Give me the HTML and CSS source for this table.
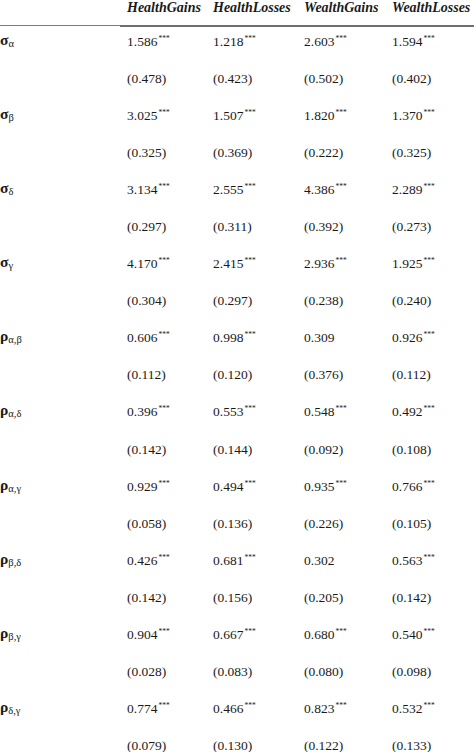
FILE: index.html
```html
<!DOCTYPE html>
<html>
<head>
<meta charset="utf-8">
<link rel="stylesheet" href="styles.css">
</head>
<body>
<div class="table">
  <div class="head">
    <div class="cell"></div>
    <div class="cell hd">HealthGains</div>
    <div class="cell hd">HealthLosses</div>
    <div class="cell hd">WealthGains</div>
    <div class="cell hd">WealthLosses</div>
  </div>
  <div class="rule"></div>
  <div class="body">
    <div class="cell lab"><b>σ</b><sub>α</sub></div>
    <div class="cell">1.586<sup>***</sup></div><div class="cell">1.218<sup>***</sup></div><div class="cell">2.603<sup>***</sup></div><div class="cell">1.594<sup>***</sup></div>
    <div class="cell"></div><div class="cell">(0.478)</div><div class="cell">(0.423)</div><div class="cell">(0.502)</div><div class="cell">(0.402)</div>

    <div class="cell lab"><b>σ</b><sub>β</sub></div>
    <div class="cell">3.025<sup>***</sup></div><div class="cell">1.507<sup>***</sup></div><div class="cell">1.820<sup>***</sup></div><div class="cell">1.370<sup>***</sup></div>
    <div class="cell"></div><div class="cell">(0.325)</div><div class="cell">(0.369)</div><div class="cell">(0.222)</div><div class="cell">(0.325)</div>

    <div class="cell lab"><b>σ</b><sub>δ</sub></div>
    <div class="cell">3.134<sup>***</sup></div><div class="cell">2.555<sup>***</sup></div><div class="cell">4.386<sup>***</sup></div><div class="cell">2.289<sup>***</sup></div>
    <div class="cell"></div><div class="cell">(0.297)</div><div class="cell">(0.311)</div><div class="cell">(0.392)</div><div class="cell">(0.273)</div>

    <div class="cell lab"><b>σ</b><sub>γ</sub></div>
    <div class="cell">4.170<sup>***</sup></div><div class="cell">2.415<sup>***</sup></div><div class="cell">2.936<sup>***</sup></div><div class="cell">1.925<sup>***</sup></div>
    <div class="cell"></div><div class="cell">(0.304)</div><div class="cell">(0.297)</div><div class="cell">(0.238)</div><div class="cell">(0.240)</div>

    <div class="cell lab"><b>ρ</b><sub>α,β</sub></div>
    <div class="cell">0.606<sup>***</sup></div><div class="cell">0.998<sup>***</sup></div><div class="cell">0.309</div><div class="cell">0.926<sup>***</sup></div>
    <div class="cell"></div><div class="cell">(0.112)</div><div class="cell">(0.120)</div><div class="cell">(0.376)</div><div class="cell">(0.112)</div>

    <div class="cell lab"><b>ρ</b><sub>α,δ</sub></div>
    <div class="cell">0.396<sup>***</sup></div><div class="cell">0.553<sup>***</sup></div><div class="cell">0.548<sup>***</sup></div><div class="cell">0.492<sup>***</sup></div>
    <div class="cell"></div><div class="cell">(0.142)</div><div class="cell">(0.144)</div><div class="cell">(0.092)</div><div class="cell">(0.108)</div>

    <div class="cell lab"><b>ρ</b><sub>α,γ</sub></div>
    <div class="cell">0.929<sup>***</sup></div><div class="cell">0.494<sup>***</sup></div><div class="cell">0.935<sup>***</sup></div><div class="cell">0.766<sup>***</sup></div>
    <div class="cell"></div><div class="cell">(0.058)</div><div class="cell">(0.136)</div><div class="cell">(0.226)</div><div class="cell">(0.105)</div>

    <div class="cell lab"><b>ρ</b><sub>β,δ</sub></div>
    <div class="cell">0.426<sup>***</sup></div><div class="cell">0.681<sup>***</sup></div><div class="cell">0.302</div><div class="cell">0.563<sup>***</sup></div>
    <div class="cell"></div><div class="cell">(0.142)</div><div class="cell">(0.156)</div><div class="cell">(0.205)</div><div class="cell">(0.142)</div>

    <div class="cell lab"><b>ρ</b><sub>β,γ</sub></div>
    <div class="cell">0.904<sup>***</sup></div><div class="cell">0.667<sup>***</sup></div><div class="cell">0.680<sup>***</sup></div><div class="cell">0.540<sup>***</sup></div>
    <div class="cell"></div><div class="cell">(0.028)</div><div class="cell">(0.083)</div><div class="cell">(0.080)</div><div class="cell">(0.098)</div>

    <div class="cell lab"><b>ρ</b><sub>δ,γ</sub></div>
    <div class="cell">0.774<sup>***</sup></div><div class="cell">0.466<sup>***</sup></div><div class="cell">0.823<sup>***</sup></div><div class="cell">0.532<sup>***</sup></div>
    <div class="cell"></div><div class="cell">(0.079)</div><div class="cell">(0.130)</div><div class="cell">(0.122)</div><div class="cell">(0.133)</div>
  </div>
</div>
</body>
</html>
```
FILE: styles.css
```css
html, body {
  margin: 0;
  padding: 0;
  background: #ffffff;
}
body {
  font-family: "Liberation Serif", "Times New Roman", serif;
  font-size: 13.5px;
  color: #1a1a1a;
  width: 474px;
  height: 752px;
  overflow: hidden;
}
.table {
  display: flex;
  flex-direction: column;
}
.head, .body {
  display: grid;
  grid-template-columns: 127px 86px 91px 88px 82px;
}
.head {
  height: 25px;
  align-items: center;
}
.hd {
  font-weight: bold;
  font-style: italic;
  font-size: 14px;
  white-space: nowrap;
  padding-bottom: 10px;
}
.rule {
  height: 1px;
  background: #7a7a7a;
  position: relative;
}
.rule::after {
  content: "";
  position: absolute;
  left: 120px;
  right: 0;
  top: 0;
  height: 2px;
  background: #6e6e6e;
}
.body {
  grid-auto-rows: 37.05px;
  align-items: center;
}
.cell {
  white-space: nowrap;
  line-height: 16px;
}
.body .cell {
  padding-bottom: 5px;
}
.lab b {
  font-size: 15.5px;
}
.lab sub {
  font-size: 10.5px;
  vertical-align: -2px;
}
sup {
  font-size: 7.5px;
  vertical-align: 5px;
  line-height: 0;
  margin-left: 1px;
}
```
